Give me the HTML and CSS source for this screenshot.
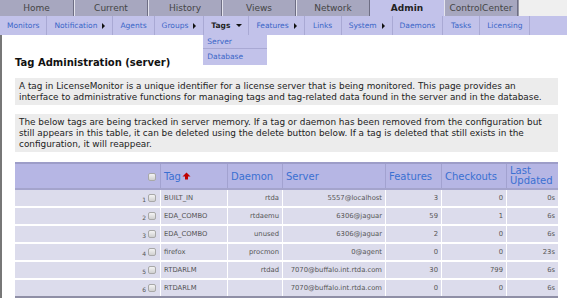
FILE: index.html
```html
<!DOCTYPE html>
<html lang="en">
<head>
    <meta charset="UTF-8">
    <title>Tag Administration</title>
    <link rel="stylesheet" href="styles.css">
</head>
<body>
    <div class="tabs">
        <a class="tab">Home</a>
        <a class="tab">Current</a>
        <a class="tab">History</a>
        <a class="tab">Views</a>
        <a class="tab">Network</a>
        <a class="tab active">Admin</a>
        <a class="tab">ControlCenter</a>
        <div class="tab-fill"></div>
    </div>

    <div class="subnav">
        <a class="item">Monitors</a>
        <a class="item">Notification<span class="arr-r"></span></a>
        <a class="item">Agents</a>
        <a class="item">Groups<span class="arr-r"></span></a>
        <a class="item current">Tags<span class="arr-d"></span>
            <div class="dropdown">
                <span class="drop-item">Server</span>
                <span class="drop-item">Database</span>
            </div>
        </a>
        <a class="item">Features<span class="arr-r"></span></a>
        <a class="item">Links</a>
        <a class="item">System<span class="arr-r"></span></a>
        <a class="item">Daemons</a>
        <a class="item">Tasks</a>
        <a class="item">Licensing</a>
    </div>

    <div class="page">
        <h1>Tag Administration (server)</h1>

        <p class="note">A tag in LicenseMonitor is a unique identifier for a license server that is being monitored. This page provides an interface to administrative functions for managing tags and tag-related data found in the server and in the database.</p>

        <p class="note">The below tags are being tracked in server memory. If a tag or daemon has been removed from the configuration but still appears in this table, it can be deleted using the delete button below. If a tag is deleted that still exists in the configuration, it will reappear.</p>

        <table class="tags">
            <thead>
                <tr>
                    <th class="sel"><input type="checkbox" class="cb"></th>
                    <th class="c-tag">Tag<svg class="sort" width="9" height="8" viewBox="0 0 9 8"><path d="M4.5 0.5 L8.5 4.5 L6 4.5 L6 7.5 L3 7.5 L3 4.5 L0.5 4.5 Z" fill="#c00000"/></svg></th>
                    <th class="c-daemon">Daemon</th>
                    <th class="c-server">Server</th>
                    <th class="c-feat">Features</th>
                    <th class="c-chk">Checkouts</th>
                    <th class="c-upd">Last<br>Updated</th>
                </tr>
            </thead>
            <tbody>
                <tr>
                    <td class="sel"><span class="num">1</span><input type="checkbox" class="cb"></td>
                    <td>BUILT_IN</td><td class="r">rtda</td><td class="r">5557@localhost</td><td class="r">3</td><td class="r">0</td><td class="r">0s</td>
                </tr>
                <tr>
                    <td class="sel"><span class="num">2</span><input type="checkbox" class="cb"></td>
                    <td>EDA_COMBO</td><td class="r">rtdaemu</td><td class="r">6306@jaguar</td><td class="r">59</td><td class="r">1</td><td class="r">6s</td>
                </tr>
                <tr>
                    <td class="sel"><span class="num">3</span><input type="checkbox" class="cb"></td>
                    <td>EDA_COMBO</td><td class="r">unused</td><td class="r">6306@jaguar</td><td class="r">2</td><td class="r">0</td><td class="r">6s</td>
                </tr>
                <tr>
                    <td class="sel"><span class="num">4</span><input type="checkbox" class="cb"></td>
                    <td>firefox</td><td class="r">procmon</td><td class="r">0@agent</td><td class="r">0</td><td class="r">0</td><td class="r">23s</td>
                </tr>
                <tr>
                    <td class="sel"><span class="num">5</span><input type="checkbox" class="cb"></td>
                    <td>RTDARLM</td><td class="r">rtdad</td><td class="r">7070@buffalo.int.rtda.com</td><td class="r">30</td><td class="r">799</td><td class="r">6s</td>
                </tr>
                <tr>
                    <td class="sel"><span class="num">6</span><input type="checkbox" class="cb"></td>
                    <td>RTDARLM</td><td class="r"></td><td class="r">7070@buffalo.int.rtda.com</td><td class="r">0</td><td class="r">0</td><td class="r">6s</td>
                </tr>
            </tbody>
        </table>
    </div>
</body>
</html>
```

FILE: styles.css
```css
body {
    margin: 0;
    font-family: "DejaVu Sans", Verdana, sans-serif;
    background: #fff;
    color: #222;
}
a {
    text-decoration: none;
}
.tabs {
    display: flex;
    height: 16px;
}
.tab {
    box-sizing: border-box;
    width: 74px;
    height: 16px;
    line-height: 16px;
    text-align: center;
    font-size: 9px;
    color: #454545;
    background: #a7a7bf;
    border-left: 1px solid #e4e4ee;
    border-right: 1px solid #6e6e84;
}
.tab:first-child {
    border-left: none;
}
.tab.active {
    background: #c2c2ea;
    font-weight: bold;
    color: #222;
    border-left: 1px solid #c2c2ea;
    border-right: 1px solid #c2c2ea;
}
.tab-fill {
    flex: 1;
    background: #efefef;
    border-left: 1px solid #9a9aa8;
}
.subnav {
    display: flex;
    height: 19px;
    background: #c2c2ea;
}
.item {
    position: relative;
    display: flex;
    align-items: center;
    justify-content: center;
    box-sizing: border-box;
    min-width: 37px;
    padding: 0 7px;
    font-size: 7.5px;
    color: #3a66c8;
    border-right: 1px solid #a9a9d4;
}
.item.current {
    font-weight: bold;
    color: #222;
    padding-right: 6px;
}
.arr-r {
    display: inline-block;
    margin-left: 5px;
    border-top: 3px solid transparent;
    border-bottom: 3px solid transparent;
    border-left: 3px solid #111;
}
.arr-d {
    display: inline-block;
    margin-left: 6px;
    border-left: 3px solid transparent;
    border-right: 3px solid transparent;
    border-top: 3px solid #111;
}
.dropdown {
    position: absolute;
    top: 19px;
    left: -1px;
    width: 64px;
    background: #c2c2ea;
    font-weight: normal;
    z-index: 5;
}
.drop-item {
    display: block;
    padding: 0 4px;
    height: 13px;
    line-height: 13px;
    color: #3a66c8;
    border-bottom: 1px solid #a9a9d4;
}
.drop-item:last-child {
    height: 16px;
    line-height: 16px;
    border-bottom: none;
}
.page {
    border-left: 2px solid #777;
    padding: 1px 9px 0 13px;
    min-height: 263px;
    box-sizing: border-box;
}
h1 {
    font-size: 10px;
    margin: 21px 0 10px 0;
    color: #111;
}
.note {
    background: #ececec;
    font-size: 8.9px;
    line-height: 11px;
    padding: 3px 4px 2px 4px;
    margin: 0 0 9px 0;
    color: #222;
}
.tags {
    width: 100%;
    border-collapse: collapse;
    margin-top: 10px;
    border-top: 2px solid #9d9dc8;
    border-bottom: 2px solid #8f8fa6;
}
.tags th {
    background: #b6b6e4;
    color: #3a70d2;
    font-weight: normal;
    font-size: 10px;
    text-align: left;
    height: 24px;
    padding: 0 3px;
    border-left: 1px solid #a2a2d0;
    border-bottom: 2px solid #a4a4cc;
}
.tags th.sel {
    border-left: none;
    text-align: right;
}
.tags th.c-upd {
    line-height: 10px;
}
.sort {
    margin-left: 1px;
    vertical-align: 0;
}
.tags td {
    background: #dcdcec;
    color: #555;
    font-size: 6.8px;
    height: 16px;
    padding: 0 3px;
    border: 1px solid #fff;
    border-top: 2px solid #fff;
}
.tags tr:first-child td {
    border-top: none;
}
.tags td:first-child {
    border-left: none;
}
.tags td:last-child {
    border-right: none;
}
.tags td.r {
    text-align: right;
}
.tags td.sel {
    text-align: right;
    width: 139px;
}
.num {
    font-size: 6px;
    vertical-align: -2px;
}
.cb {
    -webkit-appearance: none;
    appearance: none;
    width: 8px;
    height: 8px;
    margin: 0 1px 0 2px;
    vertical-align: middle;
    border: 1px solid #a8a8a8;
    border-radius: 2px;
    background: linear-gradient(#f4f4f4, #d0d0d0);
}
.c-tag { width: 60px; }
.c-daemon { width: 48px; }
.c-server { width: 96px; }
.c-feat { width: 49px; }
.c-chk { width: 58px; }
```
